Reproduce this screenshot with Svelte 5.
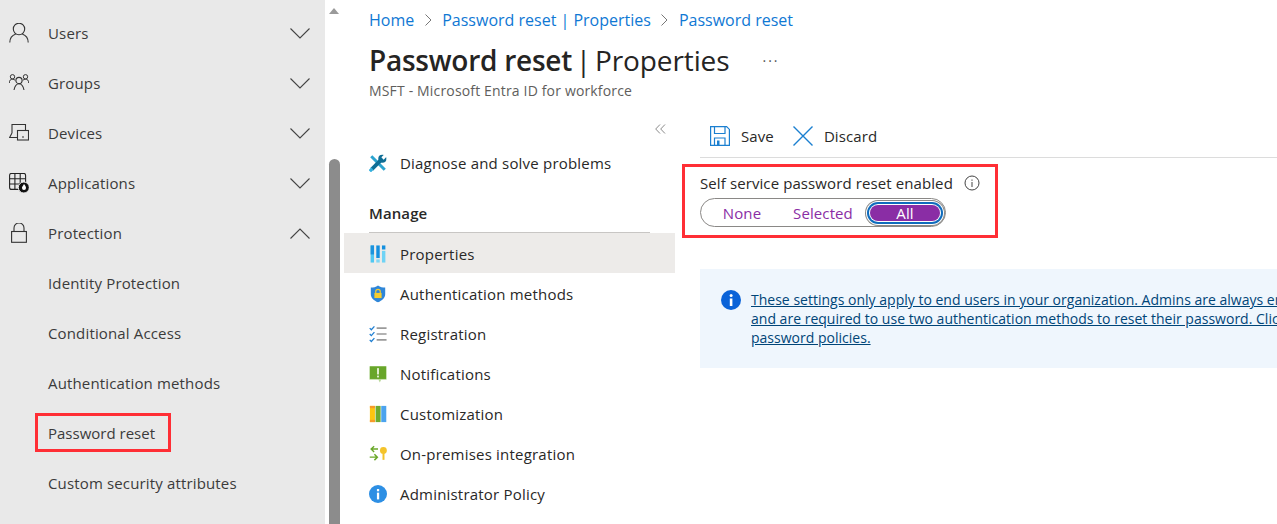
<script>
  const sideTop = [
    { label: 'Users', icon: 'users', open: false },
    { label: 'Groups', icon: 'groups', open: false },
    { label: 'Devices', icon: 'devices', open: false },
    { label: 'Applications', icon: 'apps', open: false },
    { label: 'Protection', icon: 'lock', open: true }
  ];
  const sideSub = ['Identity Protection', 'Conditional Access', 'Authentication methods', 'Password reset', 'Custom security attributes'];
  const manage = [
    { label: 'Properties', icon: 'props', active: true },
    { label: 'Authentication methods', icon: 'shield' },
    { label: 'Registration', icon: 'reg' },
    { label: 'Notifications', icon: 'notif' },
    { label: 'Customization', icon: 'custom' },
    { label: 'On-premises integration', icon: 'onprem' },
    { label: 'Administrator Policy', icon: 'admin' }
  ];
</script>

{#snippet icon(name)}
  <svg class="ic" viewBox="0 0 20 20" width="20" height="20" aria-hidden="true">
    {#if name === 'users'}
      <circle cx="10" cy="6" r="5.700" fill="none" stroke="#333" stroke-width="1.100"/>
      <path d="M.8 19.500c0-4.500 2.500-7.300 6-8.500M19.200 19.500c0-4.500-2.500-7.300-6-8.500" fill="none" stroke="#333" stroke-width="1.100"/>
    {:else if name === 'groups'}
      <circle cx="10" cy="7.500" r="3.100" fill="none" stroke="#333" stroke-width="1.100"/>
      <path d="M5 17c.8-4 2.800-6.300 5-6.300s4.200 2.300 5 6.300" fill="none" stroke="#333" stroke-width="1.100"/>
      <circle cx="3.500" cy="3.800" r="2.200" fill="none" stroke="#333" stroke-width="1"/>
      <circle cx="16.500" cy="3.800" r="2.200" fill="none" stroke="#333" stroke-width="1"/>
      <path d="M.3 10c0-2.500 1.200-3.900 3.200-3.900 1.200 0 2.100.5 2.700 1.400M19.700 10c0-2.500-1.200-3.900-3.200-3.900-1.200 0-2.100.5-2.700 1.400" fill="none" stroke="#333" stroke-width="1"/>
    {:else if name === 'devices'}
      <path d="M3 10V1.500h13.500v5.500M3 10L.6 14.500H8.500" fill="none" stroke="#333" stroke-width="1.100"/>
      <rect x="8.500" y="7.500" width="11" height="9.500" fill="none" stroke="#333" stroke-width="1.100"/>
      <path d="M13 14h2" stroke="#333" stroke-width="1.200"/>
    {:else if name === 'apps'}
      <rect x=".6" y=".4" width="16" height="16" rx="2" fill="none" stroke="#222" stroke-width="1.100"/>
      <path d="M.6 5.700h16M.6 11h16M5.900.4v16M11.200.4v16" stroke="#222" stroke-width="1.100"/>
      <circle cx="14.800" cy="14.500" r="5.500" fill="#111" stroke="#e9e9e9" stroke-width="1"/>
      <path d="M15 11c1.500 1.700 2 3 2 4a2 2 0 0 1-4 0c0-1 .5-1.500 1-2.200z" fill="#fff"/>
    {:else if name === 'lock'}
      <path d="M5 8.500V5a5 5 0 0 1 10 0v3.500" fill="none" stroke="#333" stroke-width="1.100"/>
      <rect x="2.600" y="8.500" width="14.800" height="10.800" fill="none" stroke="#333" stroke-width="1.100"/>
    {:else if name === 'tools'}
      <path d="M2.500 2.500L17.500 17.500" stroke="#2ba3cf" stroke-width="3.400"/>
      <path d="M3 17L13.500 6.500" stroke="#0e6d95" stroke-width="4.200"/>
      <circle cx="14.800" cy="5.200" r="4.500" fill="#0e6d95"/>
      <path d="M15 5L20 0" stroke="#fff" stroke-width="3.600"/>
      <path d="M.9 19.100L3.700 16.300" stroke="#32b0de" stroke-width="3.600"/>
    {:else if name === 'props'}
      <rect x="1.800" y=".5" width="3.800" height="19" fill="#50c8f2"/>
      <rect x="1.800" y=".5" width="3.800" height="10" fill="#1d93dd"/>
      <rect x="8.100" y=".5" width="3.800" height="14" fill="#1490df"/>
      <rect x="8.100" y="16" width="3.800" height="3.500" fill="#7fd7f5"/>
      <rect x="14.400" y=".5" width="3.800" height="4.500" fill="#1490df"/>
      <rect x="14.400" y="6.500" width="3.800" height="13" fill="#6fd3f5"/>
    {:else if name === 'shield'}
      <path d="M10 .5c2.500 1.800 5 2.300 8 2.300v7.500c0 4-3.500 7-8 9-4.500-2-8-5-8-9V2.800C5 2.800 7.500 2.300 10 .5z" fill="#2f86d8"/>
      <path d="M7.500 9V7.300a2.500 2.500 0 0 1 5 0V9" fill="none" stroke="#f5cc30" stroke-width="1.300"/>
      <rect x="6" y="8.800" width="8" height="5.700" fill="#f7cd2e"/>
    {:else if name === 'reg'}
      <path d="M.8 3.500l1.800 1.800L6 1.500M.8 10l1.800 1.800L6 8M.8 16.500l1.800 1.800L6 14.500" fill="none" stroke="#1f7fd2" stroke-width="1.400"/>
      <path d="M8.500 3.500h11M8.500 10h11M8.500 16.500h11" stroke="#9a9a9a" stroke-width="1.800"/>
    {:else if name === 'notif'}
      <path d="M.5 1.500h19v15h-6l-1.500 3-1.500-3H.5z" fill="#b9d99a"/>
      <path d="M1 1.500h18v14H1z" fill="#68a62a"/>
      <rect x="9" y="3.500" width="2" height="7" fill="#eef6e2"/>
      <rect x="9" y="11.800" width="2" height="2" fill="#eef6e2"/>
    {:else if name === 'custom'}
      <rect x="1" y="1" width="5.600" height="18" fill="#fdc510"/>
      <rect x="1" y="1" width="5.600" height="2.500" fill="#f79a2b"/>
      <rect x="1" y="16.500" width="5.600" height="2.500" fill="#f79a2b"/>
      <rect x="7.300" y="1" width="5.600" height="18" fill="#6eaa2e"/>
      <rect x="13.600" y="1" width="5.600" height="18" fill="#4ba3ee"/>
    {:else if name === 'onprem'}
      <path d="M10 4.500H2.500M5.700 1.300L2.400 4.500l3.300 3.200" fill="none" stroke="#6aa82a" stroke-width="1.600"/>
      <path d="M.8 13.500h8.400M6 10.200l3.300 3.300L6 16.800" fill="none" stroke="#6aa82a" stroke-width="1.600"/>
      <circle cx="16" cy="6" r="3.800" fill="#f4c32b"/>
      <rect x="15" y="8.500" width="2.200" height="8" fill="#f4c32b"/>
    {:else if name === 'admin'}
      <circle cx="10" cy="10" r="10" fill="#2d8fe4"/>
      <rect x="8.800" y="8.500" width="2.500" height="7.500" fill="#fff"/>
      <rect x="8.800" y="4.500" width="2.500" height="2.500" fill="#fff"/>
    {/if}
  </svg>
{/snippet}

<div class="app">
  <nav class="side">
    {#each sideTop as item}
      <div class="side-row">
        {@render icon(item.icon)}
        <span class="side-label">{item.label}</span>
        <svg class="chev" viewBox="0 0 20 11" width="20" height="11" aria-hidden="true">
          <path d={item.open ? 'M.5 10.500L10 1l9.500 9.500' : 'M.5.500L10 10l9.500-9.500'} fill="none" stroke="#444" stroke-width="1.100"/>
        </svg>
      </div>
    {/each}
    {#each sideSub as label}
      <div class="side-row sub">
        {#if label === 'Password reset'}
          <span class="marked">{label}</span>
        {:else}
          <span class="side-label">{label}</span>
        {/if}
      </div>
    {/each}
  </nav>

  <div class="scroll">
    <span class="arrow"></span>
    <div class="thumb"></div>
  </div>

  <main class="main">
    <header class="head">
      <div class="crumbs">
        <a>Home</a>
        <svg viewBox="0 0 7 12" width="7" height="12"><path d="M.5.500L6 6 .5 11.500" fill="none" stroke="#777" stroke-width="1"/></svg>
        <a>Password reset | Properties</a>
        <svg viewBox="0 0 7 12" width="7" height="12"><path d="M.5.500L6 6 .5 11.500" fill="none" stroke="#777" stroke-width="1"/></svg>
        <a>Password reset</a>
      </div>
      <div class="title-row">
        <h1><b>Password reset</b> | <span>Properties</span></h1>
        <span class="more">···</span>
      </div>
      <div class="subtitle">MSFT - Microsoft Entra ID for workforce</div>
    </header>

    <div class="body">
      <aside class="menu">
        <div class="collapse">
          <svg viewBox="0 0 11 10" width="11" height="10"><path d="M5 .5L.7 5 5 9.500M10 .5L5.700 5 10 9.500" fill="none" stroke="#8a8a8a" stroke-width="1"/></svg>
        </div>
        <div class="menu-row diag">{@render icon('tools')}<span>Diagnose and solve problems</span></div>
        <div class="menu-section">Manage</div>
        {#each manage as m}
          <div class="menu-row item" class:active={m.active}>{@render icon(m.icon)}<span>{m.label}</span></div>
        {/each}
      </aside>

      <section class="content">
        <div class="toolbar">
          <svg class="tool-ic" viewBox="0 0 20 20" width="20" height="20" aria-hidden="true">
            <path d="M.6.600h16l2.800 2.800v16H.6z" fill="none" stroke="#1b7fd0" stroke-width="1.200"/>
            <path d="M4.500 1v6.500h10.500V1M4.500 19.500v-7.500h10.500v7.500" fill="none" stroke="#1b7fd0" stroke-width="1.200"/>
            <rect x="7" y="14.500" width="2.500" height="5" fill="#1b7fd0"/>
          </svg>
          <span class="tool-text">Save</span>
          <svg class="tool-ic x" viewBox="0 0 20 20" width="20" height="20" aria-hidden="true">
            <path d="M.5.500l19 19M19.500.500l-19 19" stroke="#1b7fd0" stroke-width="1.400"/>
          </svg>
          <span class="tool-text">Discard</span>
        </div>

        <div class="boxed">
          <div class="field-label">
            <span>Self service password reset enabled</span>
            <svg viewBox="0 0 16 16" width="16" height="16" aria-hidden="true">
              <circle cx="8" cy="8" r="7" fill="none" stroke="#444" stroke-width="1"/>
              <rect x="7.500" y="7" width="1" height="5" fill="#444"/>
              <rect x="7.500" y="4.500" width="1" height="1.300" fill="#444"/>
            </svg>
          </div>
          <div class="toggle">
            <span class="opt none">None</span>
            <span class="opt sel">Selected</span>
            <span class="opt on">All</span>
          </div>
        </div>

        <div class="info">
          <svg class="info-ic" viewBox="0 0 20 20" width="20" height="20" aria-hidden="true">
            <circle cx="10" cy="10" r="10" fill="#0b63d8"/>
            <rect x="8.800" y="8.500" width="2.600" height="7.500" fill="#fff"/>
            <circle cx="10.100" cy="5.600" r="1.500" fill="#fff"/>
          </svg>
          <div class="info-text">
            <a>These settings only apply to end users in your organization. Admins are always enabled for self-service password reset</a>
            <a>and are required to use two authentication methods to reset their password. Click here to learn more about administrator</a>
            <a>password policies.</a>
          </div>
        </div>
      </section>
    </div>
  </main>
</div>

<style>
  :global(body) {
    margin: 0;
    background: #fff;
  }
  .app {
    display: flex;
    width: 1277px;
    height: 524px;
    overflow: hidden;
    font-family: "Open Sans", "Noto Sans", sans-serif;
    font-size: 15px;
    letter-spacing: 0.1px;
    color: #292827;
  }
  .side {
    width: 325px;
    flex: none;
    box-sizing: border-box;
    padding-top: 8px;
    background: #e9e9e9;
    color: #3b3b3b;
    letter-spacing: 0.15px;
  }
  .side-row {
    display: flex;
    align-items: center;
    height: 50px;
    padding-left: 9px;
  }
  .side-row .ic {
    flex: none;
    margin-right: 19px;
  }
  .side-row.sub {
    padding-left: 48px;
  }
  .side-label {
    flex: 1;
  }
  .chev {
    margin-right: 15px;
  }
  .marked {
    margin-left: -13px;
    margin-top: -1px;
    padding: 7px 13px 6px 10px;
    border: 3px solid #ff2e35;
    letter-spacing: 0;
    line-height: 20px;
    height: 20px;
  }
  .scroll {
    position: relative;
    flex: none;
    width: 11px;
    margin: 0 4px;
  }
  .arrow {
    position: absolute;
    top: 8px;
    left: 0;
    border-left: 5.500px solid transparent;
    border-right: 5.500px solid transparent;
    border-bottom: 6px solid #9a9a9a;
  }
  .thumb {
    margin-top: 159px;
    height: 365px;
    background: #8c8c8c;
    border-radius: 5.500px 5.500px 0 0;
  }
  .main {
    flex: 1;
    min-width: 0;
  }
  .head {
    box-sizing: border-box;
    padding: 9px 0 0 25px;
    height: 115px;
  }
  .crumbs {
    display: flex;
    align-items: center;
    gap: 10.500px;
    height: 22px;
    font-size: 16px;
    letter-spacing: 0;
    color: #0f78d4;
  }
  .title-row {
    display: flex;
    align-items: center;
    margin-top: 10px;
    height: 38px;
  }
  h1 {
    margin: 0;
    font-size: 28px;
    font-weight: 400;
    letter-spacing: 0;
    word-spacing: -3.500px;
    line-height: 38px;
    color: #252423;
  }
  h1 b {
    font-weight: 600;
    letter-spacing: -0.25px;
    word-spacing: 0;
  }
  h1 span {
    letter-spacing: -0.1px;
  }
  .more {
    margin-left: 33px;
    font-size: 14px;
    color: #555;
    letter-spacing: 2px;
  }
  .subtitle {
    margin-top: 3px;
    font-size: 14px;
    letter-spacing: 0.16px;
    line-height: 18px;
    color: #605e5c;
  }
  .body {
    display: flex;
  }
  .menu {
    flex: none;
    width: 331px;
  }
  .collapse {
    display: flex;
    justify-content: flex-end;
    height: 10px;
    padding: 9px 9px 0 0;
  }
  .menu-row {
    display: flex;
    align-items: center;
    height: 40px;
    padding-left: 25px;
    letter-spacing: 0.2px;
  }
  .menu-row.item {
    box-sizing: border-box;
    padding-top: 2px;
  }
  .menu-row .ic {
    flex: none;
    margin-right: 13px;
    width: 18px;
    height: 18px;
  }
  .menu-row.diag {
    margin-top: 9px;
  }
  .menu-row.active {
    background: #edebe9;
  }
  .menu-section {
    margin: 18px 25px 0;
    height: 31px;
    line-height: 24px;
    font-weight: 600;
    border-bottom: 1px solid #c8c6c4;
  }
  .content {
    flex: 1;
    min-width: 0;
    padding-left: 25px;
  }
  .toolbar {
    display: flex;
    align-items: center;
    height: 43px;
    box-sizing: border-box;
    border-bottom: 1px solid #dcdcdc;
    padding-left: 10px;
  }
  .tool-ic {
    flex: none;
    margin-right: 11px;
  }
  .tool-ic.x {
    margin-left: 19px;
  }
  .boxed {
    box-sizing: border-box;
    width: 316px;
    height: 74px;
    margin: 6px 0 0 -18px;
    border: 3px solid #ff2e35;
    padding: 6px 0 0 15px;
  }
  .field-label {
    display: flex;
    align-items: center;
    gap: 11px;
    height: 20px;
  }
  .toggle {
    display: flex;
    align-items: center;
    box-sizing: border-box;
    width: 246px;
    height: 29px;
    margin-top: 5px;
    border: 1px solid #8a8886;
    border-radius: 15px;
    color: #8a2da5;
  }
  .opt {
    text-align: center;
  }
  .none {
    width: 82px;
  }
  .sel {
    width: 80px;
  }
  .on {
    width: 70px;
    height: 16px;
    margin-left: 7px;
    line-height: 16px;
    border-radius: 8px;
    background: #8a2da5;
    color: #fff;
    box-shadow: 0 0 0 1px #fff, 0 0 0 3px #0f6cbd, 0 0 0 4px #fff, 0 0 0 5px #8a8886;
  }
  .info {
    display: flex;
    box-sizing: border-box;
    height: 99px;
    margin-top: 31px;
    padding: 21px 0 0 21px;
    background: #eff6fd;
    overflow: hidden;
  }
  .info-ic {
    flex: none;
    margin-right: 10px;
  }
  .info-text a {
    display: block;
    white-space: nowrap;
    font-size: 14px;
    letter-spacing: 0.01px;
    line-height: 19px;
    color: #004578;
    text-decoration: underline;
  }
</style>
